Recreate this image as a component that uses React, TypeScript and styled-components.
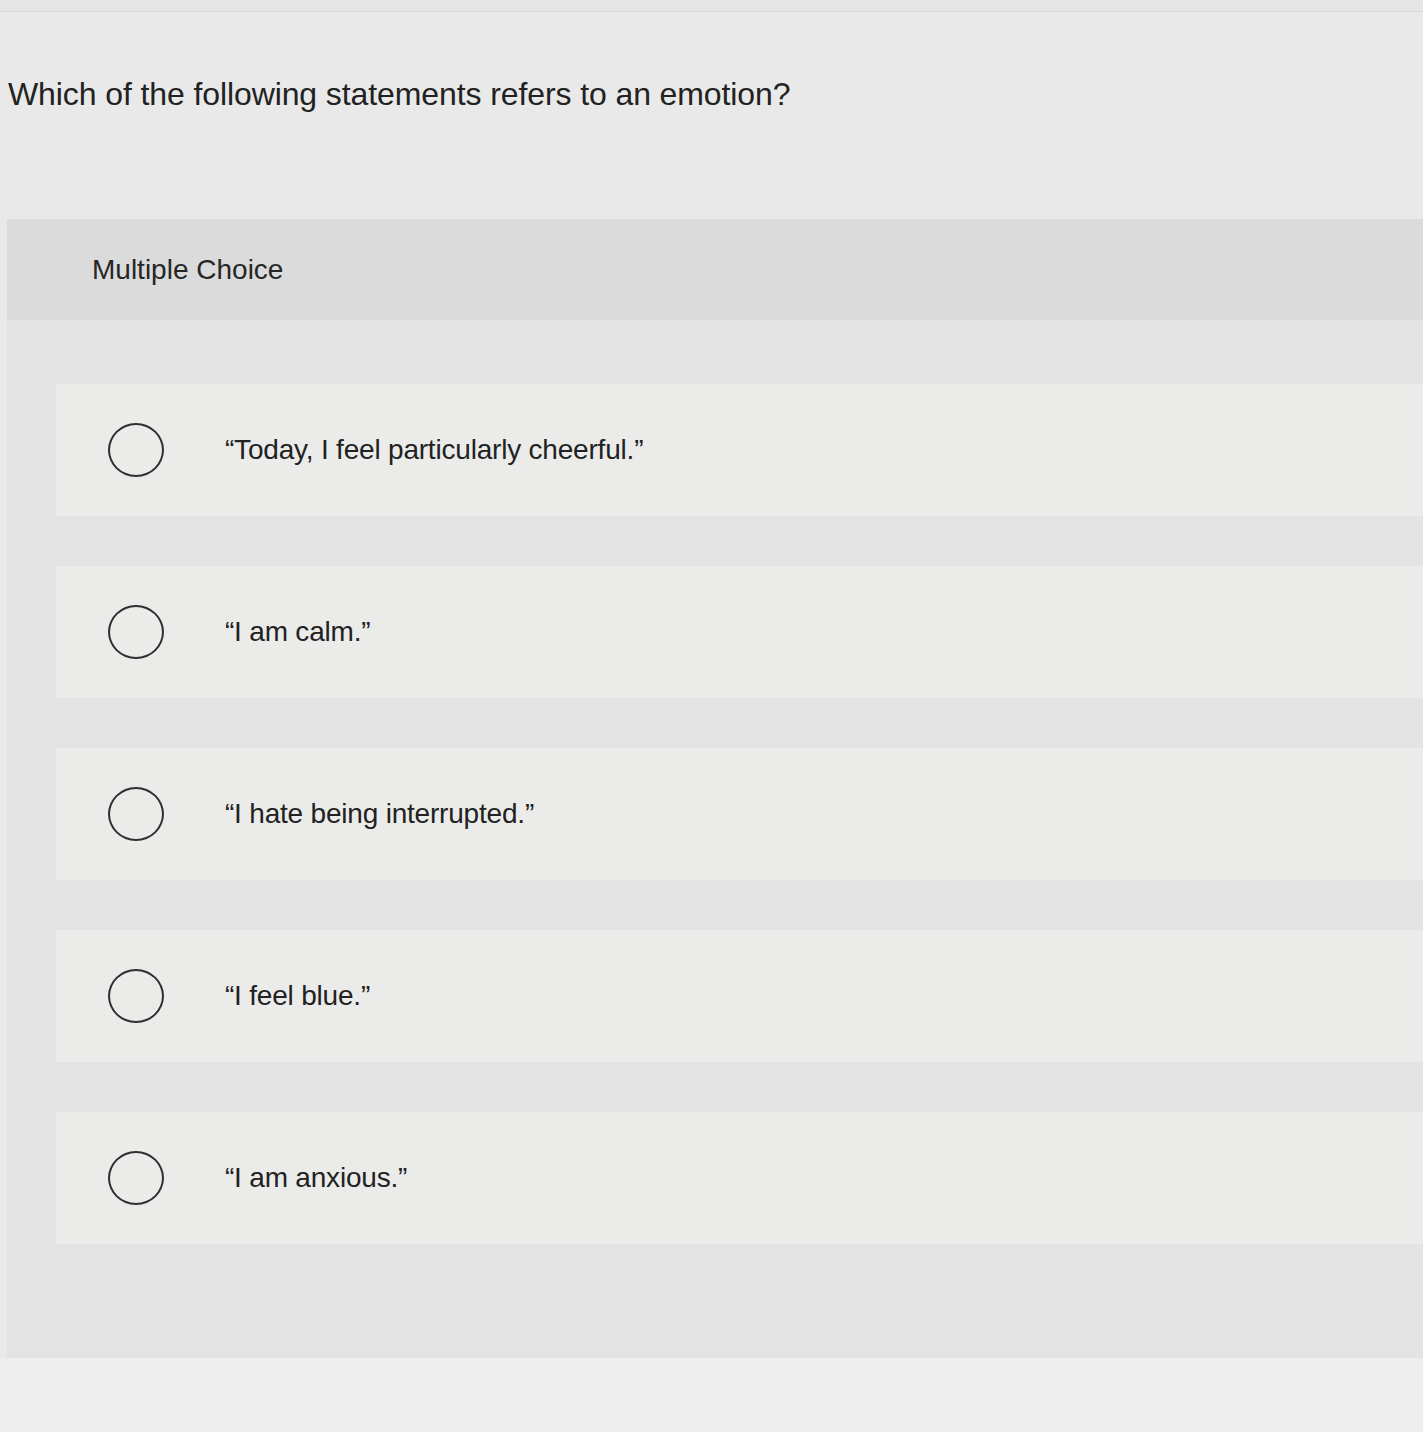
import React from 'react';
import styled, { createGlobalStyle } from 'styled-components';

const GlobalStyle = createGlobalStyle`
  html, body {
    margin: 0;
    padding: 0;
    background: #e8e9e8;
  }
  body {
    font-family: 'Liberation Sans', 'Open Sans', Arial, sans-serif;
    color: #222;
  }
`;

const Page = styled.div`
  width: 1423px;
  min-height: 1432px;
  display: flex;
  flex-flow: column;
  background: #e8e9e8;
  overflow: hidden;
`;

const TopRule = styled.div`
  height: 11px;
  border-bottom: 1px solid #d8d9d8;
  background: #e4e5e4;
`;

const Question = styled.h1`
  margin: 0;
  padding: 62px 0 0 8px;
  height: 145px;
  box-sizing: border-box;
  font-size: 32px;
  line-height: 40px;
  font-weight: 400;
  letter-spacing: -0.1px;
  color: #222;
`;

const Panel = styled.section`
  margin: 62px 0 0 7px;
  background: #e2e3e2;
  padding-bottom: 114px;
`;

const PanelHeader = styled.div`
  height: 101px;
  display: flex;
  align-items: center;
  padding-left: 85px;
  background: #dadbda;
  font-size: 28px;
  color: #262626;
`;

const Options = styled.div`
  display: flex;
  flex-flow: column;
  gap: 50px;
  padding: 64px 0 0 49px;
`;

const Option = styled.label`
  height: 132px;
  display: flex;
  align-items: center;
  background: #ebecea;
  padding-left: 52px;
  cursor: pointer;
`;

const Radio = styled.span`
  width: 56px;
  height: 54px;
  box-sizing: border-box;
  border: 2px solid #2f2f2f;
  border-radius: 50%;
  flex-shrink: 0;
  margin-right: 61px;
`;

const OptionText = styled.span`
  font-size: 28px;
  color: #222;
  letter-spacing: -0.2px;
`;

const Footer = styled.div`
  flex: 1;
  background: #edeeed;
`;

const choices = [
  '\u201cToday, I feel particularly cheerful.\u201d',
  '\u201cI am calm.\u201d',
  '\u201cI hate being interrupted.\u201d',
  '\u201cI feel blue.\u201d',
  '\u201cI am anxious.\u201d'
];

const App: React.FC = () => (
  <React.Fragment>
    <GlobalStyle />
    <Page>
      <TopRule />
      <Question>Which of the following statements refers to an emotion?</Question>
      <Panel>
        <PanelHeader>Multiple Choice</PanelHeader>
        <Options>
          {choices.map(choice => (
            <Option key={choice}>
              <Radio />
              <OptionText>{choice}</OptionText>
            </Option>
          ))}
        </Options>
      </Panel>
      <Footer />
    </Page>
  </React.Fragment>
);

export default App;
